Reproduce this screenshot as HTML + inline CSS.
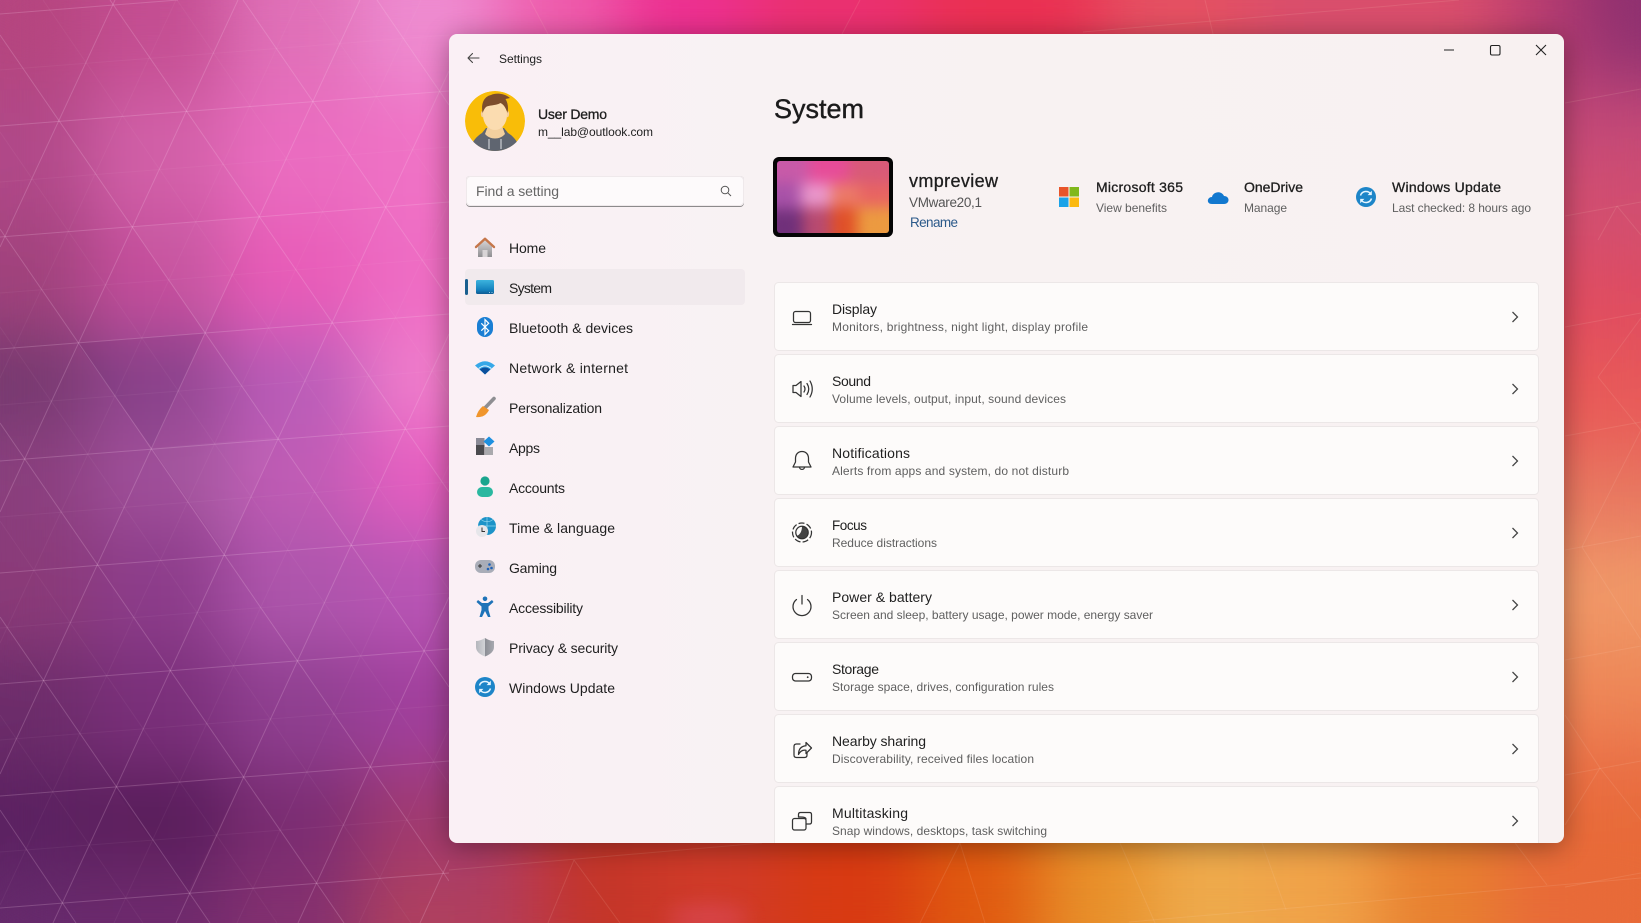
<!DOCTYPE html>
<html lang="en"><head><meta charset="utf-8"><title>Settings</title>
<style>
html,body{margin:0;padding:0;width:1641px;height:923px;overflow:hidden;background:#a04a90}
svg{display:block}
text{font-family:"Liberation Sans",sans-serif;fill:#1f1f1f;font-size:14px}
.d{font-size:12px;fill:#5f5f5f}
.s{stroke:#1b1b1b;stroke-width:.3px}
.i{fill:none;stroke:#333;stroke-width:1.25;stroke-linecap:round;stroke-linejoin:round}
.l1 line{stroke:#ffd8ee;stroke-opacity:.2;stroke-width:1}
.l2 line{stroke:#ffd8ee;stroke-opacity:.055;stroke-width:1}
.l3 line{stroke:#ffd8c0;stroke-opacity:.13;stroke-width:1}
</style></head><body>
<svg width="1641" height="923" viewBox="0 0 1641 923" xmlns="http://www.w3.org/2000/svg">
<defs>
<filter id="bl" filterUnits="userSpaceOnUse" x="0" y="0" width="1641" height="923" color-interpolation-filters="sRGB"><feGaussianBlur stdDeviation="34"/><feComponentTransfer><feFuncA type="linear" slope="20"/></feComponentTransfer></filter>
<filter id="bs" filterUnits="userSpaceOnUse" x="777" y="161" width="112" height="72" color-interpolation-filters="sRGB"><feGaussianBlur stdDeviation="7"/><feComponentTransfer><feFuncA type="linear" slope="20"/></feComponentTransfer></filter>
<filter id="sh" filterUnits="userSpaceOnUse" x="400" y="0" width="1220" height="900"><feGaussianBlur stdDeviation="14"/></filter>
<filter id="bb" filterUnits="userSpaceOnUse" x="620" y="860" width="180" height="63"><feGaussianBlur stdDeviation="10"/></filter>
<clipPath id="win"><rect x="449" y="34" width="1115" height="809" rx="8"/></clipPath>
<clipPath id="left"><rect x="0" y="0" width="449" height="923"/></clipPath>
<clipPath id="th"><rect x="777" y="161" width="112" height="72" rx="3"/></clipPath>
<clipPath id="av"><circle cx="495" cy="121" r="30"/></clipPath>
<linearGradient id="wg" x1="0" x2="1" y1="0" y2="0"><stop offset="0" stop-color="#faf0f5"/><stop offset=".3" stop-color="#f8f2f3"/><stop offset="1" stop-color="#f8f1f1"/></linearGradient>
<linearGradient id="sys" x1="0" x2="0" y1="0" y2="1"><stop offset="0" stop-color="#3cb4de"/><stop offset=".7" stop-color="#1482bd"/><stop offset="1" stop-color="#0d5a92"/></linearGradient>
<linearGradient id="gr" x1="0" x2="0" y1="0" y2="1"><stop offset="0" stop-color="#d8d4d6"/><stop offset="1" stop-color="#8f8f92"/></linearGradient>
<linearGradient id="sg" x1="0" x2="1" y1="0" y2="0"><stop offset="0" stop-color="#b4b6bc"/><stop offset=".5" stop-color="#d2d3d7"/><stop offset=".5" stop-color="#8b8d94"/><stop offset="1" stop-color="#a7a9b0"/></linearGradient>
<g id="wu"><circle cx="0" cy="0" r="10" fill="#1d85c8"/><path d="M-5.5 -1.5A5.8 5.8 0 0 1 4.8 -3" fill="none" stroke="#e6f6ff" stroke-width="1.5"/><path d="M5.8 -6.2V-1.9H1.6Z" fill="#e6f6ff"/><path d="M5.5 1.5A5.8 5.8 0 0 1 -4.8 3" fill="none" stroke="#e6f6ff" stroke-width="1.5"/><path d="M-5.8 6.2V1.9H-1.6Z" fill="#e6f6ff"/></g>
</defs>

<!-- wallpaper -->
<g filter="url(#bl)">
<rect x="500" y="100" width="1000" height="700" fill="#e0605a"/>
<rect x="0" y="0" width="90" height="90" fill="#b5457f"/><rect x="90" y="0" width="135" height="90" fill="#c44e92"/><rect x="225" y="0" width="135" height="90" fill="#e070b8"/><rect x="360" y="0" width="140" height="90" fill="#ee8bd0"/>
<rect x="0" y="90" width="90" height="130" fill="#b04888"/><rect x="90" y="90" width="135" height="130" fill="#d260a8"/><rect x="225" y="90" width="135" height="130" fill="#ea6cc0"/><rect x="360" y="90" width="140" height="130" fill="#ef72c5"/>
<rect x="0" y="220" width="90" height="115" fill="#a0427c"/><rect x="90" y="220" width="135" height="115" fill="#c44e9c"/><rect x="225" y="220" width="135" height="115" fill="#e85cb8"/><rect x="360" y="220" width="140" height="115" fill="#ee6cc4"/>
<rect x="0" y="335" width="90" height="90" fill="#75396f"/><rect x="90" y="335" width="135" height="90" fill="#914690"/><rect x="225" y="335" width="135" height="90" fill="#b85cb8"/><rect x="360" y="335" width="140" height="90" fill="#ef7ecc"/>
<rect x="0" y="425" width="90" height="105" fill="#8a3f7e"/><rect x="90" y="425" width="135" height="105" fill="#a04f9a"/><rect x="225" y="425" width="135" height="105" fill="#c05cb5"/><rect x="360" y="425" width="140" height="105" fill="#e55ec0"/>
<rect x="0" y="530" width="90" height="120" fill="#8a3a78"/><rect x="90" y="530" width="135" height="120" fill="#8c3c8a"/><rect x="225" y="530" width="135" height="120" fill="#ae55ac"/><rect x="360" y="530" width="140" height="120" fill="#b855b5"/>
<rect x="0" y="650" width="90" height="120" fill="#6c2c6a"/><rect x="90" y="650" width="135" height="120" fill="#7a2f7a"/><rect x="225" y="650" width="135" height="120" fill="#8f3f90"/><rect x="360" y="650" width="140" height="120" fill="#a03f9c"/>
<rect x="0" y="770" width="90" height="95" fill="#5a2060"/><rect x="90" y="770" width="135" height="95" fill="#5c1f5c"/><rect x="225" y="770" width="135" height="95" fill="#7a2c72"/><rect x="360" y="770" width="140" height="95" fill="#a03a70"/>
<rect x="0" y="865" width="90" height="58" fill="#662a6c"/><rect x="90" y="865" width="135" height="58" fill="#6f2a6e"/><rect x="225" y="865" width="135" height="58" fill="#84306f"/><rect x="360" y="865" width="140" height="58" fill="#b0405e"/>
<rect x="500" y="0" width="120" height="130" fill="#ee5cac"/><rect x="620" y="0" width="130" height="130" fill="#ec3090"/><rect x="750" y="0" width="170" height="130" fill="#ea3070"/><rect x="920" y="0" width="180" height="130" fill="#ea3052"/><rect x="1100" y="0" width="150" height="130" fill="#e45062"/><rect x="1250" y="0" width="250" height="130" fill="#d94e6c"/><rect x="1500" y="0" width="80" height="100" fill="#b83c70"/><rect x="1580" y="0" width="61" height="80" fill="#8e3070"/>
<rect x="500" y="780" width="50" height="143" fill="#b83a55"/><rect x="550" y="780" width="100" height="143" fill="#c43528"/><rect x="650" y="780" width="130" height="143" fill="#cf3a28"/><rect x="780" y="780" width="140" height="143" fill="#d83a12"/><rect x="920" y="780" width="120" height="143" fill="#e05a10"/><rect x="1040" y="780" width="110" height="143" fill="#e8902a"/><rect x="1150" y="780" width="110" height="143" fill="#eeaa4c"/><rect x="1260" y="780" width="120" height="143" fill="#f0a248"/><rect x="1380" y="780" width="120" height="143" fill="#e88030"/><rect x="1500" y="780" width="141" height="143" fill="#e86a38"/>
<rect x="1500" y="80" width="141" height="80" fill="#c24878"/><rect x="1500" y="160" width="141" height="100" fill="#d24e70"/><rect x="1500" y="260" width="141" height="90" fill="#e04c60"/><rect x="1500" y="350" width="141" height="100" fill="#e85a58"/><rect x="1500" y="450" width="141" height="90" fill="#e87860"/><rect x="1500" y="540" width="141" height="100" fill="#f09868"/><rect x="1500" y="640" width="141" height="90" fill="#ee8858"/><rect x="1500" y="730" width="141" height="60" fill="#ea7048"/>
</g>
<ellipse cx="708" cy="918" rx="40" ry="14" fill="#e05070" opacity=".45" filter="url(#bb)"/>
<!-- facets -->
<g clip-path="url(#left)">
<path d="M259 217 L205 333 L132 227Z" fill="#fff" opacity=".035"/>
<path d="M77 343 L205 333 L152 448Z" fill="#2a1050" opacity=".08"/>
<path d="M152 448 L278 437 L225 553Z" fill="#fff" opacity=".035"/>
<path d="M115 789 L243 777 L188 892 Z" fill="#200540" opacity=".06"/>
<g class="l1">
<line x1="0" y1="14" x2="178" y2="0"/><line x1="0" y1="126" x2="449" y2="91"/><line x1="0" y1="237" x2="449" y2="202"/><line x1="0" y1="349" x2="449" y2="314"/><line x1="0" y1="461" x2="449" y2="426"/><line x1="0" y1="573" x2="449" y2="538"/><line x1="0" y1="684" x2="449" y2="649"/><line x1="0" y1="796" x2="449" y2="761"/><line x1="0" y1="908" x2="449" y2="873"/>
<line x1="0" y1="810" x2="76" y2="923"/><line x1="0" y1="617" x2="210" y2="923"/><line x1="0" y1="423" x2="344" y2="923"/><line x1="0" y1="229" x2="449" y2="881"/><line x1="0" y1="35" x2="449" y2="687"/><line x1="110" y1="0" x2="449" y2="492"/><line x1="243" y1="0" x2="449" y2="299"/><line x1="377" y1="0" x2="449" y2="105"/>
<line x1="115" y1="0" x2="0" y2="247"/><line x1="238" y1="0" x2="0" y2="512"/><line x1="360" y1="0" x2="0" y2="774"/><line x1="449" y1="71" x2="53" y2="923"/><line x1="449" y1="334" x2="176" y2="923"/><line x1="449" y1="597" x2="298" y2="923"/><line x1="449" y1="860" x2="420" y2="923"/>
</g>
<g class="l2">
<line x1="0" y1="70" x2="449" y2="35"/><line x1="0" y1="182" x2="449" y2="147"/><line x1="0" y1="293" x2="449" y2="258"/><line x1="0" y1="405" x2="449" y2="370"/><line x1="0" y1="517" x2="449" y2="482"/><line x1="0" y1="628" x2="449" y2="593"/><line x1="0" y1="740" x2="449" y2="705"/><line x1="0" y1="852" x2="449" y2="817"/>
<line x1="0" y1="715" x2="143" y2="923"/><line x1="0" y1="521" x2="277" y2="923"/><line x1="0" y1="327" x2="411" y2="923"/><line x1="0" y1="132" x2="449" y2="784"/><line x1="43" y1="0" x2="449" y2="590"/><line x1="177" y1="0" x2="449" y2="395"/><line x1="310" y1="0" x2="449" y2="202"/>
<line x1="176" y1="0" x2="0" y2="378"/><line x1="299" y1="0" x2="0" y2="643"/><line x1="421" y1="0" x2="0" y2="905"/><line x1="449" y1="202" x2="114" y2="923"/><line x1="449" y1="465" x2="237" y2="923"/><line x1="449" y1="728" x2="359" y2="923"/>
</g>
</g>
<g class="l3">
<line x1="1565" y1="103" x2="1641" y2="89"/><line x1="1565" y1="216" x2="1641" y2="202"/><line x1="1565" y1="327" x2="1641" y2="313"/><line x1="1565" y1="436" x2="1641" y2="422"/><line x1="1565" y1="550" x2="1641" y2="536"/><line x1="1565" y1="660" x2="1641" y2="646"/><line x1="1565" y1="775" x2="1641" y2="761"/><line x1="1565" y1="887" x2="1641" y2="873"/>
<line x1="1617" y1="206" x2="1641" y2="235"/><line x1="1617" y1="206" x2="1598" y2="240"/><line x1="1598" y1="377" x2="1641" y2="430"/><line x1="1598" y1="377" x2="1641" y2="318"/><line x1="1582" y1="547" x2="1641" y2="430"/><line x1="1582" y1="547" x2="1641" y2="640"/><line x1="1600" y1="768" x2="1641" y2="820"/><line x1="1600" y1="768" x2="1565" y2="825"/><line x1="1600" y1="768" x2="1565" y2="715"/>
<line x1="449" y1="870" x2="762" y2="843"/><line x1="1129" y1="922" x2="1641" y2="878"/><line x1="1083" y1="32" x2="1459" y2="0"/>
<line x1="1286" y1="910" x2="1262" y2="843"/><line x1="1547" y1="885" x2="1515" y2="843"/><line x1="574" y1="860" x2="620" y2="923"/><line x1="574" y1="860" x2="548" y2="923"/><line x1="960" y1="843" x2="985" y2="923"/><line x1="960" y1="843" x2="920" y2="923"/><line x1="1120" y1="843" x2="1155" y2="923"/><line x1="530" y1="0" x2="548" y2="34"/><line x1="860" y1="0" x2="842" y2="34"/><line x1="1205" y1="0" x2="1213" y2="34"/>
</g>

<!-- window -->
<rect x="449" y="38" width="1115" height="809" rx="10" fill="#000" opacity=".36" filter="url(#sh)"/>
<g clip-path="url(#win)">
<rect x="449" y="34" width="1115" height="809" fill="url(#wg)"/>

<!-- title bar -->
<path d="M468 58H479M468 58l4.5-4.5M468 58l4.5 4.5" fill="none" stroke="#444" stroke-width="1.1" stroke-linecap="round"/>
<text x="499" y="63" textLength="43" style="font-size:12px">Settings</text>
<path d="M1444 50H1454" stroke="#222" stroke-width="1.1"/>
<rect x="1490.5" y="45.5" width="9.5" height="9.5" rx="1.5" fill="none" stroke="#222" stroke-width="1.1"/>
<path d="M1536 45L1546 55M1546 45L1536 55" stroke="#222" stroke-width="1.1"/>

<!-- avatar -->
<g clip-path="url(#av)">
<circle cx="495" cy="121" r="30" fill="#f9bd08"/>
<path d="M470 151C471 142 477 136 482 133L486 128H504L508 133C513 136 519 142 520 151Z" fill="#5f6570"/>
<path d="M488 126H502L505 134C500 140 490 140 485 134Z" fill="#f2cf9e"/>
<path d="M489 139V149M501 139V149" stroke="#d5d8dc" stroke-width="1.1"/>
<ellipse cx="482.5" cy="114" rx="1.6" ry="3.2" fill="#f5cf9e"/><ellipse cx="507.5" cy="114" rx="1.6" ry="3.2" fill="#f5cf9e"/>
<ellipse cx="495" cy="115" rx="12" ry="15" fill="#fbdcb0"/>
<path d="M482.5 113C480.5 101 486 96 491 95C496 92.5 505 93.5 510 98L505.5 99C508 103 508.5 108 507.5 113C505.5 107 503.5 104.5 500.5 103C495 106 488.5 105 486 107C484 109 483.5 111 482.5 113Z" fill="#7d4d2c"/>
</g>
<text x="538" y="119" class="s" textLength="69" style="font-size:14px">User Demo</text>
<text x="538" y="136" textLength="115" style="font-size:12px">m__lab@outlook.com</text>

<!-- search -->
<rect x="466" y="176" width="278" height="31" rx="4" fill="#8c8a8b"/>
<rect x="466" y="176" width="278" height="30" rx="4" fill="#fdfafb"/>
<rect x="466.5" y="176.5" width="277" height="29" rx="4" fill="none" stroke="#efe9eb"/>
<text x="476" y="196" textLength="83" style="fill:#666">Find a setting</text>
<circle cx="725" cy="190" r="3.8" fill="none" stroke="#555" stroke-width="1"/><path d="M727.8 192.8L731 196" stroke="#555" stroke-width="1"/>

<!-- nav -->
<rect x="465" y="269" width="280" height="36" rx="4" fill="#f1eaed"/>
<rect x="465" y="279" width="3" height="16" rx="1.5" fill="#1a5f8f"/>
<text x="509" y="253" textLength="37">Home</text>
<text x="509" y="293" textLength="43">System</text>
<text x="509" y="333" textLength="124">Bluetooth &amp; devices</text>
<text x="509" y="373" textLength="119">Network &amp; internet</text>
<text x="509" y="413" textLength="93">Personalization</text>
<text x="509" y="453" textLength="31">Apps</text>
<text x="509" y="493" textLength="56">Accounts</text>
<text x="509" y="533" textLength="106">Time &amp; language</text>
<text x="509" y="573" textLength="48">Gaming</text>
<text x="509" y="613" textLength="74">Accessibility</text>
<text x="509" y="653" textLength="109">Privacy &amp; security</text>
<text x="509" y="693" textLength="106">Windows Update</text>

<!-- nav icons -->
<path d="M478 246.5L485 240L492 246.5V257H478Z" fill="url(#gr)"/><rect x="482.5" y="250" width="5" height="7" fill="#d8d4d6"/>
<path d="M476 247L485 238.7L494 247" fill="none" stroke="#c5764a" stroke-width="2.4" stroke-linecap="round" stroke-linejoin="round"/>
<rect x="476" y="280" width="18" height="14" rx="1.5" fill="url(#sys)"/><path d="M489 292.5h1M491.5 292.5h1" stroke="#bfe6f7" stroke-width=".8"/>
<rect x="477" y="317" width="16" height="20" rx="8" fill="#1a7fd4"/><path d="M481.3 323.3L488.7 330.7L485 334.4V319.6L488.7 323.3L481.3 330.7" fill="none" stroke="#fff" stroke-width="1.2"/>
<path d="M475 365.5Q485 357 495 365.5L485 374.5Z" fill="#35a8e8"/><path d="M478.7 368.5Q485 363.2 491.3 368.5" fill="none" stroke="#eaf6fc" stroke-width="1"/><path d="M479.8 369.5Q485 365.5 490.2 369.5L485 374.5Z" fill="#0b4f9c"/>
<path d="M494 398.5L484 409" stroke="#8e8e92" stroke-width="3.6" stroke-linecap="round"/><path d="M483 406Q478 410 476 417Q485 418 489 410Z" fill="#f0952c"/>
<rect x="476" y="445" width="8.5" height="10" fill="#4a4a4e"/><rect x="476" y="438" width="8.5" height="7" fill="#8a8a96"/><rect x="485" y="447" width="8" height="8" fill="#a9a9ad"/><path d="M489 436.5L494.5 441.5L489 446.5L483.5 441.5Z" fill="#1e90e0"/>
<circle cx="485" cy="481" r="4.6" fill="#1aa58e"/><rect x="477" y="487" width="16" height="10" rx="5" fill="#2ab8a0"/>
<circle cx="487" cy="526" r="9" fill="#1c93c8"/><path d="M478 526H496M487 517V535M481 519.5Q487 524 493 519.5" fill="none" stroke="#8fd6ee" stroke-width=".7"/><circle cx="482" cy="531" r="6" fill="#e6e6ea"/><path d="M482 527.5V531.5H485" fill="none" stroke="#333" stroke-width="1"/>
<rect x="475" y="560" width="20" height="13" rx="6" fill="#a9adb8"/><path d="M478 566H482M480 564V568" stroke="#333" stroke-width="1"/><circle cx="489.5" cy="564.5" r="1.3" fill="#1f62b8"/><circle cx="491.5" cy="568" r="1.3" fill="#1f62b8"/><circle cx="488" cy="569" r="1.3" fill="#1f62b8"/>
<circle cx="485" cy="598.8" r="2.3" fill="#1e73b8"/><path d="M478 600L482 603H488L492 600L493.5 602L488.5 606.5V610L490.5 617H488L485 611L482 617H479.5L481.5 610V606.5L476.5 602Z" fill="#1e73b8"/>
<path d="M485 638Q490 641 494 641V647Q494 653 485 656.5Q476 653 476 647V641Q480 641 485 638Z" fill="url(#sg)"/>
<use href="#wu" x="485" y="687"/>

<!-- header -->
<text x="774" y="118" class="s" textLength="90" style="font-size:27px;fill:#1b1b1b;stroke-width:.4px">System</text>
<rect x="773" y="157" width="120" height="80" rx="6" fill="#050505"/>
<g clip-path="url(#th)">
<g filter="url(#bs)">
<rect x="777" y="161" width="32" height="22" fill="#c85aa8"/><rect x="809" y="161" width="40" height="22" fill="#e64c98"/><rect x="849" y="161" width="40" height="22" fill="#d85a78"/>
<rect x="777" y="183" width="24" height="26" fill="#a852a8"/><rect x="801" y="183" width="30" height="24" fill="#ea98cc"/><rect x="831" y="183" width="28" height="24" fill="#ec7a68"/><rect x="859" y="183" width="30" height="24" fill="#e86462"/>
<rect x="777" y="209" width="26" height="24" fill="#70307a"/><rect x="803" y="207" width="28" height="26" fill="#b84a70"/><rect x="831" y="207" width="26" height="26" fill="#e05028"/><rect x="857" y="207" width="32" height="26" fill="#ec9a40"/>
</g></g>
<text x="909" y="187" class="s" textLength="89" style="font-size:18px">vmpreview</text>
<text x="909" y="207" textLength="73" style="fill:#555;font-size:13.5px">VMware20,1</text>
<text x="910" y="227" textLength="48" style="fill:#2c5a8a;font-size:13.5px">Rename</text>

<rect x="1059" y="187" width="9.5" height="9.5" fill="#e8552a"/><rect x="1069.5" y="187" width="9.5" height="9.5" fill="#80b81c"/><rect x="1059" y="197.5" width="9.5" height="9.5" fill="#1ba3e8"/><rect x="1069.5" y="197.5" width="9.5" height="9.5" fill="#fbb910"/>
<text x="1096" y="192" class="s" textLength="87">Microsoft 365</text>
<text x="1096" y="212" class="d" textLength="71">View benefits</text>
<path d="M1212 204C1206 204 1207 197 1212 197C1213 192 1221 190 1224 196C1230 196 1230 204 1224 204Z" fill="#1278cf"/>
<text x="1244" y="192" class="s" textLength="59">OneDrive</text>
<text x="1244" y="212" class="d" textLength="43">Manage</text>
<use href="#wu" x="1366" y="197"/>
<text x="1392" y="192" class="s" textLength="109">Windows Update</text>
<text x="1392" y="212" class="d" textLength="139">Last checked: 8 hours ago</text>

<!-- cards -->
<g fill="#fdfbfa" stroke="#ece7e7">
<rect x="774.5" y="282.5" width="764" height="68" rx="4"/><rect x="774.5" y="354.5" width="764" height="68" rx="4"/><rect x="774.5" y="426.5" width="764" height="68" rx="4"/><rect x="774.5" y="498.5" width="764" height="68" rx="4"/><rect x="774.5" y="570.5" width="764" height="68" rx="4"/><rect x="774.5" y="642.5" width="764" height="68" rx="4"/><rect x="774.5" y="714.5" width="764" height="68" rx="4"/><rect x="774.5" y="786.5" width="764" height="68" rx="4"/>
</g>
<text x="832" y="314" textLength="45">Display</text><text x="832" y="331" class="d" textLength="256">Monitors, brightness, night light, display profile</text>
<text x="832" y="386" textLength="39">Sound</text><text x="832" y="403" class="d" textLength="234">Volume levels, output, input, sound devices</text>
<text x="832" y="458" textLength="78">Notifications</text><text x="832" y="475" class="d" textLength="237">Alerts from apps and system, do not disturb</text>
<text x="832" y="530" textLength="35" style="font-size:13.5px">Focus</text><text x="832" y="547" class="d" textLength="105">Reduce distractions</text>
<text x="832" y="602" textLength="100">Power &amp; battery</text><text x="832" y="619" class="d" textLength="321">Screen and sleep, battery usage, power mode, energy saver</text>
<text x="832" y="674" textLength="47">Storage</text><text x="832" y="691" class="d" textLength="222">Storage space, drives, configuration rules</text>
<text x="832" y="746" textLength="94">Nearby sharing</text><text x="832" y="763" class="d" textLength="202">Discoverability, received files location</text>
<text x="832" y="818" textLength="76">Multitasking</text><text x="832" y="835" class="d" textLength="215">Snap windows, desktops, task switching</text>

<!-- card icons -->
<g class="i">
<rect x="793.5" y="311.5" width="17" height="11" rx="2"/><path d="M792.5 324.5H811.5"/>
<path d="M793 385.5H796L801 381.5V396.5L796 392.5H793Z"/><path d="M804 386Q806 389 804 392M807 383.5Q810.5 389 807 394.5M810 381Q814.5 389 810 397"/>
<path d="M802 451.5C797.5 451.5 795.5 455 795.5 458.5V462L793 467H811L808.5 462V458.5C808.5 455 806.5 451.5 802 451.5Z"/><path d="M799.5 467.5A2.6 2.6 0 0 0 804.5 467.5"/>
<circle cx="802" cy="532.5" r="9.5" stroke-dasharray="6 2.2" stroke-linecap="butt"/><circle cx="802" cy="532.5" r="6.2"/>
<path d="M796.5 599.5A9 9 0 1 0 807.5 599.5M802 595.5V604"/>
<rect x="792.5" y="673.5" width="19" height="7.5" rx="3"/>
<path d="M800 744H796.5Q794 744 794 746.5V755Q794 757.5 796.5 757.5H804.5Q807 757.5 807 755V753"/><path d="M806 742.5L811.5 748L806 753.5V750.2Q801 749.5 798.5 754.5Q798.5 746.5 806 745.8Z"/>
<path d="M798.5 817V814.5Q798.5 812.5 800.5 812.5H809.5Q811.5 812.5 811.5 814.5V822Q811.5 824 809.5 824H806.5"/><rect x="792.5" y="818.5" width="13.5" height="11.5" rx="2"/><path d="M798.5 817H800.5Q806 817 806 819"/>
</g>
<path d="M802 526.5A6 6 0 0 1 807.8 532.5C807.8 537 803 538.7 802 538.5C799 538.5 796.5 536 796.5 536C800 535 802 531 802 526.5Z" fill="#222" opacity=".85"/>
<circle cx="807.7" cy="677.2" r=".9" fill="#333"/>
<g fill="none" stroke="#444" stroke-width="1.25">
<path d="M1512.5 312L1517.5 317L1512.5 322"/><path d="M1512.5 384L1517.5 389L1512.5 394"/><path d="M1512.5 456L1517.5 461L1512.5 466"/><path d="M1512.5 528L1517.5 533L1512.5 538"/><path d="M1512.5 600L1517.5 605L1512.5 610"/><path d="M1512.5 672L1517.5 677L1512.5 682"/><path d="M1512.5 744L1517.5 749L1512.5 754"/><path d="M1512.5 816L1517.5 821L1512.5 826"/>
</g>
</g>
</svg>
</body></html>
